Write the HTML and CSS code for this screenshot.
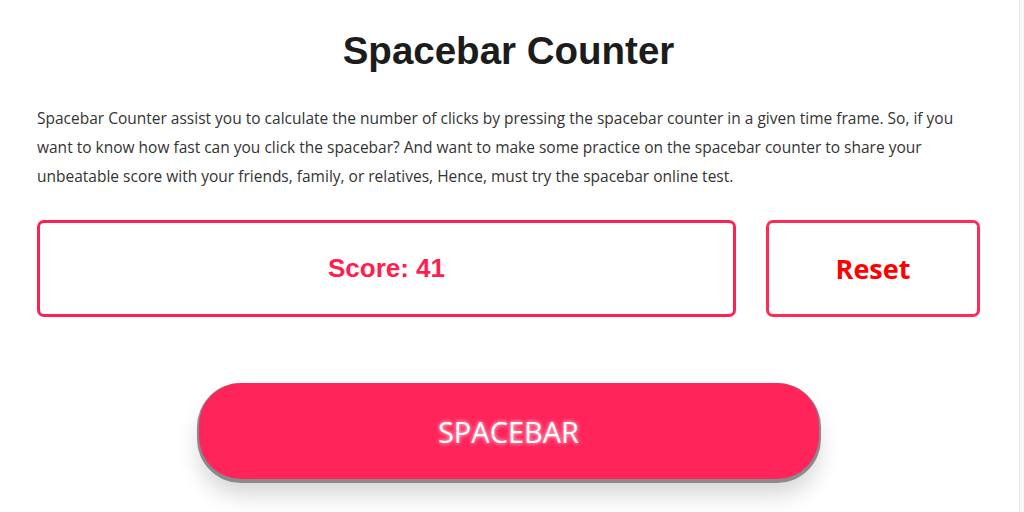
FILE: index.html
```html
<!DOCTYPE html>
<html lang="en">
<head>
    <meta charset="UTF-8">
    <meta name="viewport" content="width=device-width, initial-scale=1.0">
    <title>Spacebar Counter</title>
    <link rel="stylesheet" href="styles.css">
</head>
<body>
    <div class="page">
        <div class="main">
            <div class="container">
                <h1 class="title">Spacebar Counter</h1>
                <p class="intro">Spacebar Counter assist you to calculate the number of clicks by pressing the spacebar counter in a given time frame. So, if you want to know how fast can you click the spacebar? And want to make some practice on the spacebar counter to share your unbeatable score with your friends, family, or relatives, Hence, must try the spacebar online test.</p>
                <div class="counter-row">
                    <div class="score-box">Score: 41</div>
                    <button class="reset-btn">Reset</button>
                </div>
                <div class="space-wrap">
                    <button class="space-btn">SPACEBAR</button>
                </div>
            </div>
        </div>
        <div class="rail"></div>
    </div>
</body>
</html>
```

FILE: styles.css
```css
body {
    margin: 0;
    padding: 0;
    background-color: #ffffff;
    font-family: "Open Sans", Arial, sans-serif;
    overflow: hidden;
}
.page {
    display: flex;
    height: 100vh;
}
.main {
    flex: 1;
    padding-left: 37px;
}
.rail {
    width: 4px;
    background-color: #f7f7f7;
    border-left: 1px solid #e6e6e6;
}
.container {
    width: 943px;
}
.title {
    margin: 28px 0 0 0;
    font-family: "Liberation Sans", Arial, sans-serif;
    font-size: 38.5px;
    line-height: 46px;
    font-weight: bold;
    color: #1c1c1c;
    text-align: center;
}
.intro {
    margin: 30px 0 0 0;
    font-size: 15.5px;
    line-height: 29px;
    color: #333333;
}
.counter-row {
    display: flex;
    gap: 30px;
    margin-top: 29px;
}
.score-box {
    flex: 1;
    height: 91px;
    border: 3px solid #ff1f53;
    border-radius: 7px;
    display: flex;
    align-items: center;
    justify-content: center;
    font-family: "Liberation Sans", Arial, sans-serif;
    font-weight: bold;
    font-size: 26px;
    color: #ff1f4f;
}
.reset-btn {
    width: 214px;
    height: 97px;
    border: 3px solid #ff2a55;
    border-radius: 7px;
    background-color: #ffffff;
    font-family: "Open Sans", sans-serif;
    font-weight: bold;
    font-size: 27px;
    color: #ff0000;
    padding: 0;
    cursor: pointer;
}
.space-wrap {
    display: flex;
    justify-content: center;
    margin-top: 66px;
}
.space-btn {
    width: 620px;
    height: 96px;
    border: none;
    border-radius: 42px;
    background-color: #ff2459;
    color: #ffffff;
    font-family: "Open Sans", sans-serif;
    font-size: 29px;
    font-weight: 400;
    text-shadow: 0 0 4px rgba(255, 255, 255, 0.9);
    box-shadow: 0 2px 0 2px #8a8a8a, 0 16px 22px rgba(0, 0, 0, 0.16);
    cursor: pointer;
}
```
